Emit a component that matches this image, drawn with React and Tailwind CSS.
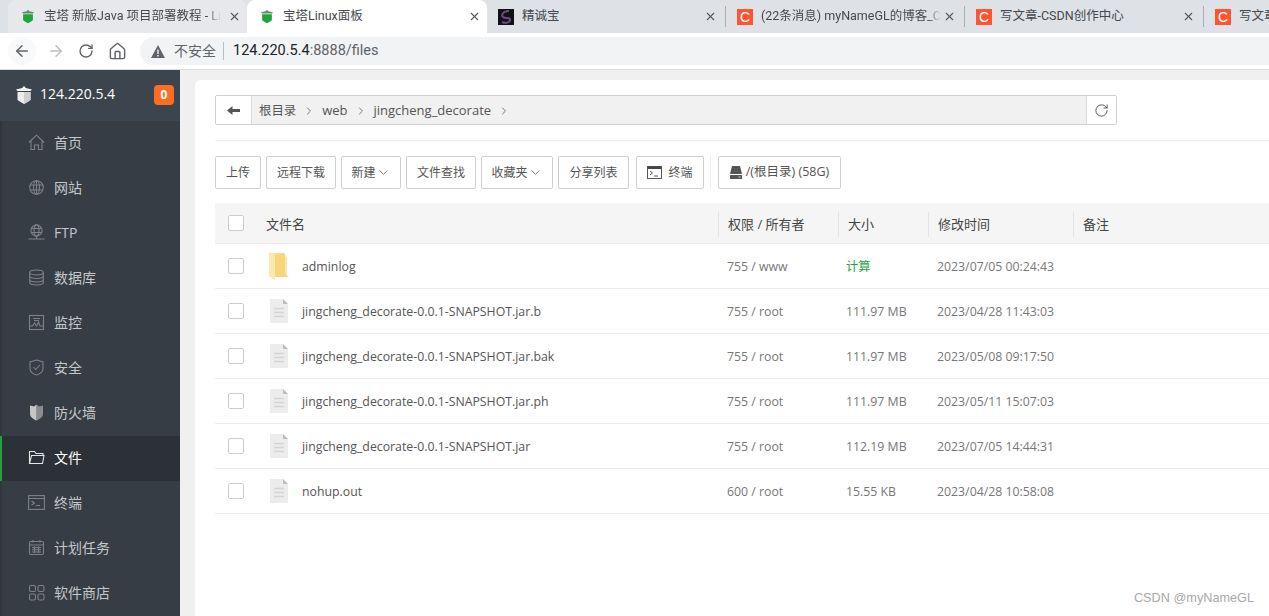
import React from 'react';
import { X, ArrowLeft, ArrowRight, RotateCw, Home, ChevronDown, ChevronRight } from 'lucide-react';

const cjk = "font-['Open_Sans','Noto_Sans_CJK_SC',sans-serif]";

function BaotaLogo({ green = true, className = '' }) {
  const body = green ? '#20a53a' : '#ececec';
  const roof = green ? '#5f8f68' : '#f5f5f5';
  return (
    <svg viewBox="0 0 16 18" className={className}>
      <path d="M8 0 L9.800 2 L16 3.400 L14.500 5 H1.500 L0 3.400 L6.200 2 Z" fill={roof} />
      <path d="M1.500 6 H14.500 V14 Q11 16.500 8 18 Q5 16.500 1.500 14 Z" fill={body} />
      {!green && <path d="M8 6 H14.500 V14 Q11 16.500 8 18 Z" fill="#cfcfcf" />}
    </svg>
  );
}

function CsdnIcon() {
  return (
    <div className="w-4 h-4 shrink-0 bg-[#fc5531] flex items-center justify-center text-white text-[14px] leading-none font-['Liberation_Sans',sans-serif]">C</div>
  );
}

function JcbIcon() {
  return (
    <svg viewBox="0 0 16 16" className="w-4 h-4 shrink-0">
      <rect width="16" height="16" fill="#111" />
      <path d="M11 2 C5 2 3 6 5 8 C7 10 11 8 12 10 C13 13 8 15 4 13" fill="none" stroke="#6a4a8c" strokeWidth="2" />
    </svg>
  );
}

const fade = '[mask-image:linear-gradient(to_left,transparent,black_14px)]';
const sideTab = 'w-[239px] border-r border-[#a9adb2] my-[6px] h-[21px] pl-[11px] gap-2';

const tabs = [
  { title: '宝塔 新版Java 项目部署教程 - Li', icon: 'bt', cls: 'w-[239px] bg-[#e6e8eb] rounded-t-lg pl-3.5 gap-2.5', text: fade, close: 'mr-1.5' },
  { title: '宝塔Linux面板', icon: 'bt', cls: 'w-[240px] bg-white rounded-t-lg pl-3.5 gap-2.5', text: '', close: 'mr-1.5' },
  { title: '精诚宝', icon: 'jcb', cls: sideTab, text: '', close: 'mr-2' },
  { title: '(22条消息) myNameGL的博客_C', icon: 'c', cls: sideTab, text: fade, close: 'mr-2' },
  { title: '写文章-CSDN创作中心', icon: 'c', cls: sideTab, text: '', close: 'mr-2' },
  { title: '写文章-CSDN创作中心', icon: 'c', cls: 'w-[239px] pl-[11px] gap-2', text: '', close: 'mr-2' },
];

function Icon({ name }) {
  const p = { fill: 'none', stroke: '#7d8287', strokeWidth: 1.1 };
  const box = 'w-[17px] h-[17px] shrink-0';
  switch (name) {
    case 'home':
      return <svg viewBox="0 0 17 17" className={box} {...p}><path d="M.8 8.500 8.500 1.200l7.700 7.300M3 7v8.500h3.500v-4.500h4v4.500H14V7" /></svg>;
    case 'site':
      return <svg viewBox="0 0 17 17" className={box} {...p}><circle cx="8.500" cy="8.500" r="6.800" /><ellipse cx="8.500" cy="8.500" rx="3" ry="6.800" /><path d="M2 6h13M2 11h13M8.500 1.700v13.600" /></svg>;
    case 'ftp':
      return <svg viewBox="0 0 17 17" className={box} {...p}><circle cx="8.500" cy="6.500" r="5.600" /><ellipse cx="8.500" cy="6.500" rx="2.500" ry="5.600" /><path d="M3 4.500h11M3 8.500h11M8.500 12v3M.5 15h16" /></svg>;
    case 'db':
      return <svg viewBox="0 0 17 17" className={box} {...p}><ellipse cx="8.500" cy="3.500" rx="6.800" ry="2.500" /><path d="M1.700 3.500v10c0 1.400 3 2.500 6.800 2.500s6.800-1.100 6.800-2.500v-10M1.700 7c0 1.400 3 2.500 6.800 2.500s6.800-1.100 6.800-2.500M1.700 10.500c0 1.400 3 2.500 6.800 2.500s6.800-1.100 6.800-2.500" /></svg>;
    case 'monitor':
      return <svg viewBox="0 0 17 17" className={box} {...p}><rect x="1.500" y="1.500" width="14" height="14" /><path d="M1.500 12h3l2-3 2 3 2-4 1.500 4h3.500M5 4.500h7M6 6.500h5" /></svg>;
    case 'safe':
      return <svg viewBox="0 0 17 17" className={box} {...p}><path d="M8.500 1 15 3v6.500c0 3-3 5.500-6.500 6.500C5 15 2 12.500 2 9.500V3Z" /><path d="m5.500 8 2.300 2.500 4-4.500" /></svg>;
    case 'wall':
      return <svg viewBox="0 0 17 17" className={box}><path d="M8.500.6 11 2.500l4-1V10c0 2.800-3 5-6.500 6.500Z" fill="#8a8d90" /><path d="M8.500.6 6 2.500l-4-1V10c0 2.800 3 5 6.500 6.500Z" fill="#c4c6c8" /></svg>;
    case 'file':
      return <svg viewBox="0 0 17 17" className={box} fill="none" stroke="#e6e6e6" strokeWidth="1.100"><path d="M1.500 14.500V2.500h5l1.500 2H15v2M1.500 14.500 3.500 6.500H16l-1.500 8Z" /></svg>;
    case 'term':
      return <svg viewBox="0 0 17 17" className={box} {...p}><rect x=".6" y="1.600" width="15.800" height="13.800" /><path d="M.6 4.500h15.800M3.500 7l3 2-3 2M8 11.500h4" /></svg>;
    case 'cron':
      return <svg viewBox="0 0 17 17" className={box} {...p}><rect x="1.500" y="2.500" width="14" height="13" rx="1.500" /><path d="M1.500 6h14M5 1v2.500M12 1v2.500M4 8.500h9M4 10.800h9M4 13h9M6.500 7.500v6.500M10.500 7.500v6.500" /></svg>;
    default:
      return <svg viewBox="0 0 17 17" className={box} {...p}><rect x="1.500" y="1.500" width="6" height="6" rx="1.500" /><rect x="10" y="1.500" width="6" height="6" rx="1.500" /><rect x="1.500" y="10" width="6" height="6" rx="1.500" /><rect x="10" y="10" width="6" height="6" rx="1.500" /></svg>;
  }
}

const menu = [
  ['home', '首页'], ['site', '网站'], ['ftp', 'FTP'], ['db', '数据库'], ['monitor', '监控'], ['safe', '安全'],
  ['wall', '防火墙'], ['file', '文件'], ['term', '终端'], ['cron', '计划任务'], ['store', '软件商店'],
];

const files = [
  { name: 'adminlog', dir: true, perm: '755 / www', size: '计算', time: '2023/07/05 00:24:43' },
  { name: 'jingcheng_decorate-0.0.1-SNAPSHOT.jar.b', perm: '755 / root', size: '111.97 MB', time: '2023/04/28 11:43:03' },
  { name: 'jingcheng_decorate-0.0.1-SNAPSHOT.jar.bak', perm: '755 / root', size: '111.97 MB', time: '2023/05/08 09:17:50' },
  { name: 'jingcheng_decorate-0.0.1-SNAPSHOT.jar.ph', perm: '755 / root', size: '111.97 MB', time: '2023/05/11 15:07:03' },
  { name: 'jingcheng_decorate-0.0.1-SNAPSHOT.jar', perm: '755 / root', size: '112.19 MB', time: '2023/07/05 14:44:31' },
  { name: 'nohup.out', perm: '600 / root', size: '15.55 KB', time: '2023/04/28 10:58:08' },
];

function FolderIcon() {
  return (
    <svg viewBox="0 0 20 28" className="w-5 h-7 shrink-0">
      <path d="M0 1 H15 L18 6 V24 H6 L0 21 Z" fill="#fbe7a3" />
      <path d="M6 2 L14 1 Q16 1 16 3 V22 L20 25 H6 Z" fill="#f6d57c" />
      <path d="M0 1 L6 5 V28 L0 24 Z" fill="#fce9ad" />
    </svg>
  );
}

function DocIcon() {
  return (
    <svg viewBox="0 0 18 24" className="w-[18px] h-6 shrink-0">
      <path d="M0 0 H13 L18 5 V24 H0 Z" fill="#ececec" />
      <path d="M13 0 L18 5 H13 Z" fill="#bdbdbd" />
      <path d="M4 9.500 H14 M4 13.500 H14 M4 17.500 H14" stroke="#d4d4d4" strokeWidth="1.500" />
    </svg>
  );
}

function TermIcon() {
  return (
    <svg viewBox="0 0 15 13" className="w-[15px] h-[13px] shrink-0">
      <rect x=".5" y=".5" width="14" height="12" fill="#fff" stroke="#555" />
      <rect x=".5" y=".5" width="14" height="2.500" fill="#444" />
      <path d="m3 5 2.500 2L3 9M7 10h4" fill="none" stroke="#555" />
    </svg>
  );
}

function DiskIcon() {
  return (
    <svg viewBox="0 0 12 13" className="w-3 h-[13px] shrink-0">
      <path d="M2 0 H10 L12 8 H0 Z" fill="#555" />
      <rect y="9" width="12" height="4" rx=".5" fill="#555" />
      <rect x="8.500" y="10.500" width="2" height="1" fill="#ddd" />
    </svg>
  );
}

function Btn({ w, children }) {
  return (
    <div className={`h-[33px] ${w} shrink-0 flex items-center justify-center bg-white border border-[#cfcfcf] rounded-[2px] text-[12px] text-[#555]`}>
      {children}
    </div>
  );
}

const headCell = 'flex items-center h-[25px] mt-[3px] border-l border-[#e4e4e4] pl-[9px] pt-px';
const rowText = 'pt-[2px]';

export default function App() {
  return (
    <div className={`w-[1269px] h-[616px] overflow-hidden flex flex-col bg-white relative ${cjk}`}>
      {/* 浏览器标签栏 */}
      <div className="h-[33px] shrink-0 bg-[#dee1e6] flex pl-2 overflow-hidden font-['Roboto','Noto_Sans_CJK_SC',sans-serif] text-[12.500px] text-[#45494d]">
        {tabs.map((t, i) => (
          <div key={i} className={`shrink-0 flex items-center ${t.cls}`}>
            {t.icon === 'bt' && <BaotaLogo className="w-3 h-[15px] shrink-0" />}
            {t.icon === 'jcb' && <JcbIcon />}
            {t.icon === 'c' && <CsdnIcon />}
            <span className="flex-1 min-w-0 whitespace-nowrap">
              <span className={`block w-fit ${t.text}`}>{t.title}</span>
            </span>
            <X size={13} strokeWidth={2} className={`shrink-0 text-[#55585c] ${t.close}`} />
          </div>
        ))}
      </div>

      {/* 地址栏 */}
      <div className="h-[37px] shrink-0 bg-white border-b border-[#dadce0] flex items-center pl-2">
        <div className="w-7 h-7 rounded-full bg-[#f8f9fa] flex items-center justify-center">
          <ArrowLeft size={18} strokeWidth={2} className="text-[#5f6368]" />
        </div>
        <ArrowRight size={18} strokeWidth={2} className="ml-[11px] text-[#bcbfc3]" />
        <RotateCw size={16} strokeWidth={2} className="ml-[13px] text-[#5f6368]" />
        <Home size={19} strokeWidth={1.800} className="ml-[14px] text-[#5f6368]" />
        <div className="ml-[13px] h-7 flex-1 rounded-l-full bg-[#f1f3f4] flex items-center pl-[11px] text-[14px] font-['Roboto','Noto_Sans_CJK_SC',sans-serif]">
          <svg viewBox="0 0 14 13" className="w-[14px] h-[13px] shrink-0"><path d="M7 0 14 13H0Z" fill="#5f6368" /><path d="M6.300 4.500h1.400v4.500H6.300zM6.300 10h1.400v1.400H6.300z" fill="#f1f3f4" /></svg>
          <span className="ml-[9px] text-[#5f6368]">不安全</span>
          <span className="ml-[7px] w-px h-[18px] bg-[#b9bcc0]" />
          <span className="ml-[9px] text-[14.500px] text-[#202124]">124.220.5.4<span className="text-[#5f6368]">:8888/files</span></span>
        </div>
      </div>

      <div className="flex-1 min-h-0 flex">
        {/* 侧边栏 */}
        <aside className="w-[180px] shrink-0 bg-[#363d44] flex flex-col">
          <div className="h-[51px] shrink-0 bg-[#3c444d] flex items-center pl-4 pr-1.5 pb-0.5">
            <BaotaLogo green={false} className="w-4 h-[18px]" />
            <span className="ml-2 flex-1 text-white text-[14px] pb-0.5">124.220.5.4</span>
            <span className="w-5 h-5 rounded-[4px] bg-[#ff6d25] text-white text-[12px] font-bold flex items-center justify-center">0</span>
          </div>
          {menu.map(([icon, label]) => (
            <div
              key={label}
              className={`h-[45px] shrink-0 flex items-center pl-[26px] pb-[2px] gap-[9px] border-l-2 text-[14px] ${label === '文件' ? 'bg-[#2c3138] border-[#20a53a] text-white' : 'border-[#30363c] text-[#c4c8cc]'}`}
            >
              <Icon name={icon} />
              <span>{label}</span>
            </div>
          ))}
        </aside>

        {/* 主内容 */}
        <main className="flex-1 min-w-0 bg-[#f0f0f0] pt-2.5 pl-[15px]">
          <div className="h-full bg-white rounded-tl-md pt-[15px] pl-5 flex flex-col">
            <div className="w-[902px] h-[30px] flex bg-[#f1f1f1] border border-[#cfcfcf] rounded-[2px] text-[13px] text-[#555]">
              <div className="w-9 shrink-0 bg-white border-r border-[#dcdcdc] flex items-center justify-center">
                <svg viewBox="0 0 13 9" className="w-[13px] h-[9px]"><path d="M0 4.500 5.500 0v3H13v3H5.500v3Z" fill="#555" /></svg>
              </div>
              <div className="flex-1 flex items-center pl-[7px] pt-[2px]">
                <span className="text-[12.400px]">根目录</span>
                <ChevronRight size={12} strokeWidth={2} className="mx-[7px] text-[#777]" />
                <span>web</span>
                <ChevronRight size={12} strokeWidth={2} className="mx-[7px] text-[#777]" />
                <span>jingcheng_decorate</span>
                <ChevronRight size={12} strokeWidth={2} className="mx-[7px] text-[#777]" />
              </div>
              <div className="w-[30px] shrink-0 bg-white border-l border-[#dcdcdc] flex items-center justify-center">
                <RotateCw size={15} strokeWidth={1.400} className="text-[#444]" />
              </div>
            </div>

            <div className="mt-[15px] border-t border-[#eeeeee] pt-[15px] flex items-center">
              <div className="flex gap-[5px]">
                <Btn w="w-[46px]">上传</Btn>
                <Btn w="w-[70px]">远程下载</Btn>
                <Btn w="w-[60px]">新建<ChevronDown size={15} strokeWidth={1.200} /></Btn>
                <Btn w="w-[70px]">文件查找</Btn>
                <Btn w="w-[72px]">收藏夹<ChevronDown size={15} strokeWidth={1.200} /></Btn>
                <Btn w="w-[71px]">分享列表</Btn>
              </div>
              <div className="ml-[7px]"><Btn w="w-[68px]"><TermIcon /><span className="ml-1.5">终端</span></Btn></div>
              <span className="ml-1.5 w-px h-[33px] bg-[#eeeeee]" />
              <div className="ml-[7px]"><Btn w="w-[123px]"><DiskIcon /><span className="ml-1 text-[12.500px]">/(根目录) (58G)</span></Btn></div>
            </div>

            <div className="mt-[14px] grid grid-cols-[503px_120px_90px_145px_1fr] items-center h-[41px] bg-[#f5f5f5] border-b border-[#ececec] text-[13px] text-[#444]">
              <div className="flex items-center pl-[13px]">
                <span className="w-4 h-4 bg-white border border-[#cccccc] rounded-[2px]" />
                <span className="ml-[22px] pt-1">文件名</span>
              </div>
              <div className={headCell}>权限 / 所有者</div>
              <div className={headCell}>大小</div>
              <div className={headCell}>修改时间</div>
              <div className={headCell}>备注</div>
            </div>

            {files.map(f => (
              <div key={f.name} className="grid grid-cols-[503px_120px_90px_145px_1fr] items-center h-[45px] shrink-0 border-b border-[#ececec] text-[12.300px] text-[#777]">
                <div className="flex items-center pl-[13px]">
                  <span className="w-4 h-4 bg-white border border-[#cccccc] rounded-[2px]" />
                  <span className={`w-[58px] flex items-center ${f.dir ? 'pl-[25px]' : 'pl-[26px]'}`}>{f.dir ? <FolderIcon /> : <DocIcon />}</span>
                  <span className={`text-[#555] ${rowText}`}>{f.name}</span>
                </div>
                <div className={`pl-[9px] ${rowText}`}>{f.perm}</div>
                <div className={`pl-2 ${rowText} ${f.dir ? 'text-[#20a53a]' : ''}`}>{f.size}</div>
                <div className={`pl-[9px] ${rowText}`}>{f.time}</div>
                <div />
              </div>
            ))}
          </div>
        </main>
      </div>

      <div className="absolute right-[15px] bottom-[8px] text-[12.700px] text-[#a8a8a8] font-['Liberation_Sans',sans-serif]">CSDN @myNameGL</div>
    </div>
  );
}
